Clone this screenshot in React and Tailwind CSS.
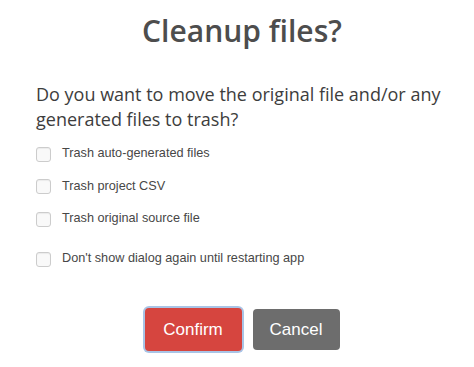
import React from "react";

function Check({ label, className = "" }) {
  return (
    <label className={"flex items-center gap-[11px] " + className}>
      <span className="w-[15px] h-[15px] rounded-[3px] border border-[#cccccc] bg-[#f9f9f9] shadow-[inset_0_1px_1px_rgba(0,0,0,0.06)]" />
      <span className="text-[12.7px] text-[#474747] font-['Liberation_Sans',sans-serif]">{label}</span>
    </label>
  );
}

export default function App() {
  return (
    <div className="w-[474px] h-[367px] bg-white font-['Open_Sans',sans-serif] text-[#444] pl-[10px]">
      <h1 className="pt-[9px] text-center text-[30px] font-semibold text-[#4d4d4d] leading-[44px]">
        Cleanup files?
      </h1>
      <p className="mt-[29px] pl-[26px] pr-[10px] text-[18px] leading-[25px] text-[#3d3d3d]">
        Do you want to move the original file and/or any generated files to trash?
      </p>
      <div className="mt-[13px] pl-[26px] flex flex-col">
        <Check label="Trash auto-generated files" className="h-[18px]" />
        <Check label="Trash project CSV" className="mt-[14.5px] h-[18px]" />
        <Check label="Trash original source file" className="mt-[14.5px] h-[18px]" />
        <Check label="Don't show dialog again until restarting app" className="mt-[22px] h-[18px]" />
      </div>
      <div className="mt-[40px] flex justify-center gap-[11px] font-['Liberation_Sans',sans-serif]">
        <button className="w-[97px] h-[43px] rounded-[4px] bg-[#d6453f] text-white text-[17px] ring-2 ring-[#a9c4e6]">
          Confirm
        </button>
        <button className="w-[87px] h-[41px] mt-[1px] rounded-[4px] bg-[#6d6d6d] text-white text-[17px]">
          Cancel
        </button>
      </div>
    </div>
  );
}
